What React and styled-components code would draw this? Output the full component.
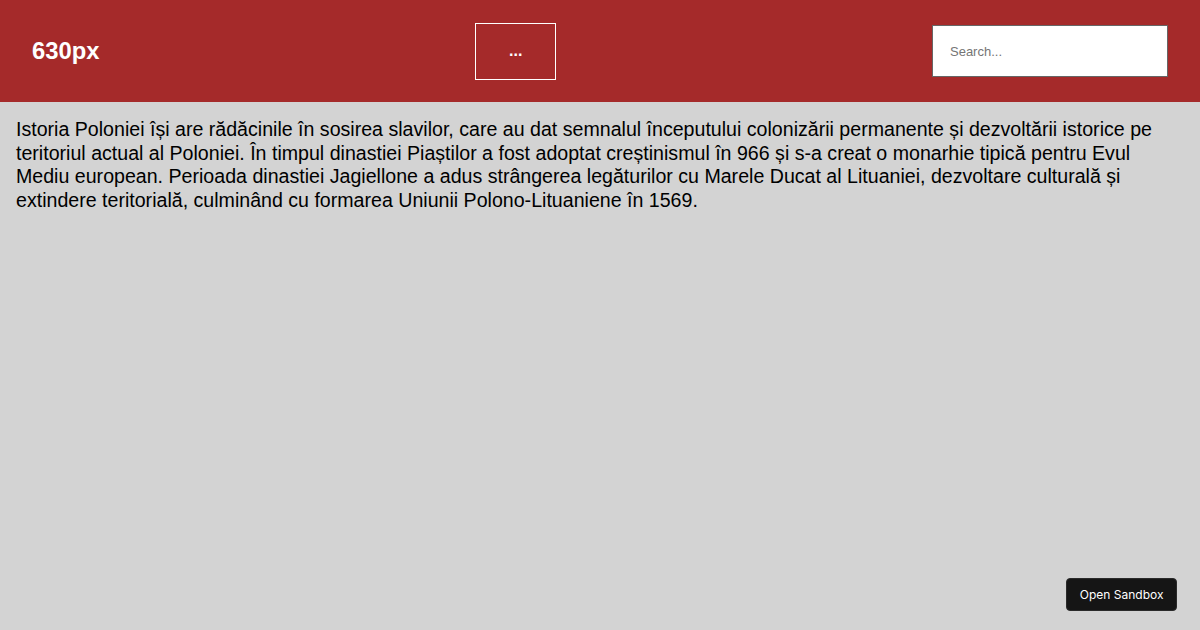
import React from "react";
import styled, { createGlobalStyle } from "styled-components";

const Global = createGlobalStyle`
  html, body { margin: 0; padding: 0; background: #d3d3d3; }
  body { font-family: "Liberation Sans", Arial, sans-serif; }
  * { box-sizing: border-box; }
`;

const Header = styled.header`
  height: 102px;
  background: #a52a2a;
  display: flex;
  align-items: center;
  justify-content: space-between;
  padding: 0 32px;
`;

const Logo = styled.div`
  color: #fff;
  font-weight: 700;
  font-size: 23.8px;
`;

const MenuButton = styled.button`
  width: 81px;
  height: 57px;
  background: transparent;
  border: 1px solid #fff;
  color: #fff;
  font-family: "Liberation Sans", Arial, sans-serif;
  font-weight: 700;
  font-size: 16px;
  padding: 0;
`;

const Search = styled.input`
  width: 236px;
  height: 52px;
  border: 1px solid #666;
  background: #fff;
  padding: 0 17px;
  font-family: "Liberation Sans", Arial, sans-serif;
  font-size: 13px;
  outline: none;
  &::placeholder { color: #757575; }
`;

const Main = styled.main`
  padding: 16px;
`;

const Paragraph = styled.p`
  margin: 0;
  font-size: 19.6px;
  line-height: 1.2;
  color: #000;
`;

const SandboxButton = styled.button`
  position: fixed;
  right: 23px;
  bottom: 19px;
  height: 33px;
  padding: 0 12.5px;
  background: #151515;
  color: #fff;
  border: 1px solid #2a2a2a;
  border-radius: 4px;
  font-family: Inter, "Liberation Sans", sans-serif;
  font-size: 12px;
`;

export default function App() {
  return (
    <>
      <Global />
      <Header>
        <Logo>630px</Logo>
        <MenuButton>...</MenuButton>
        <Search placeholder="Search..." />
      </Header>
      <Main>
        <Paragraph>
          Istoria Poloniei își are rădăcinile în sosirea slavilor, care au dat semnalul începutului colonizării permanente și dezvoltării istorice pe teritoriul actual al Poloniei. În timpul dinastiei Piaștilor a fost adoptat creștinismul în 966 și s-a creat o monarhie tipică pentru Evul Mediu european. Perioada dinastiei Jagiellone a adus strângerea legăturilor cu Marele Ducat al Lituaniei, dezvoltare culturală și extindere teritorială, culminând cu formarea Uniunii Polono-Lituaniene în 1569.
        </Paragraph>
      </Main>
      <SandboxButton>Open Sandbox</SandboxButton>
    </>
  );
}
